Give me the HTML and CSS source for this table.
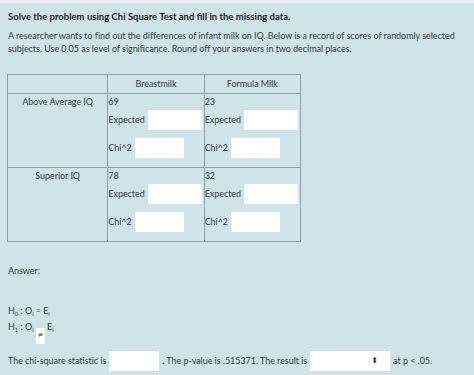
FILE: index.html
```html
<!DOCTYPE html>
<html>
<head>
<meta charset="utf-8">
<link rel="stylesheet" href="styles.css">
</head>
<body>
<div class="que">
  <p class="title">Solve the problem using Chi Square Test and fill in the missing data.</p>
  <p class="intro">A researcher wants to find out the differences of infant milk on IQ. Below is a record of scores of randomly selected subjects. Use 0.05 as level of significance. Round off your answers in two decimal places.</p>
  <table class="grid">
    <tr class="head">
      <th class="lab"></th>
      <th>Breastmilk</th>
      <th>Formula Milk</th>
    </tr>
    <tr class="row">
      <td class="lab">Above Average IQ</td>
      <td class="cell">
        <div class="val">69</div>
        <div class="fld"><span>Expected</span><span class="box wide"></span></div>
        <div class="fld"><span>Chi^2</span><span class="box"></span></div>
      </td>
      <td class="cell">
        <div class="val">23</div>
        <div class="fld"><span>Expected</span><span class="box wide"></span></div>
        <div class="fld"><span>Chi^2</span><span class="box"></span></div>
      </td>
    </tr>
    <tr class="row">
      <td class="lab">Superior IQ</td>
      <td class="cell">
        <div class="val">78</div>
        <div class="fld"><span>Expected</span><span class="box wide"></span></div>
        <div class="fld"><span>Chi^2</span><span class="box"></span></div>
      </td>
      <td class="cell">
        <div class="val">32</div>
        <div class="fld"><span>Expected</span><span class="box wide"></span></div>
        <div class="fld"><span>Chi^2</span><span class="box"></span></div>
      </td>
    </tr>
  </table>
  <p class="answer">Answer:</p>
  <div class="hyp first">H<sub>0</sub> : O<sub>i</sub> = E<sub>i</sub></div>
  <div class="hyp">H<sub>1</sub> : O<sub>i</sub> <span class="ne">≠</span> E<sub>i</sub></div>
  <div class="final">
    <span>The chi-square statistic is</span>
    <span class="box stat"></span>
    <span>. The p-value is .515371. The result is</span>
    <span class="box sel"><span class="arrows">⬍</span></span>
    <span>at p &lt; .05.</span>
  </div>
</div>
</body>
</html>
```
FILE: styles.css
```css
html, body {
  margin: 0;
  background: #cee4e9;
}
body {
  border-top: 3px solid #e6f0f2;
  font-family: Lato, "Open Sans", sans-serif;
  font-size: 9px;
  letter-spacing: -0.05px;
  color: #3a3f42;
  height: 372px;
  overflow: hidden;
}
.que {
  padding: 7px 8px 0 8px;
}
.title {
  margin: 0;
  font-weight: bold;
  font-size: 9.5px;
  letter-spacing: 0;
  color: #1b1f22;
  line-height: 13px;
}
.intro {
  margin: 6px 0 0 0;
  line-height: 13px;
}
.grid {
  margin-top: 19px;
  margin-left: -1px;
  border-collapse: collapse;
  border: 1px solid #80979e;
  width: 294px;
}
.grid th, .grid td {
  border: 1px solid #8ea3a9;
  padding: 0;
  vertical-align: top;
}
.grid th {
  font-weight: normal;
  height: 18px;
  line-height: 17px;
  text-align: center;
}
.grid th.lab { width: 99px; }
.grid td.lab {
  text-align: center;
  padding-top: 1px;
  line-height: 14px;
}
.cell {
  width: 95px;
  height: 73px;
}
.val {
  line-height: 14px;
  padding-top: 1px;
}
.fld {
  display: flex;
  align-items: center;
  gap: 3px;
  height: 21px;
  margin-top: 0;
}
.fld + .fld { margin-top: 7px; }
.box {
  display: inline-block;
  background: #fff;
  width: 49px;
  height: 20px;
}
.box.wide { width: 54px; }
.answer {
  margin: 22px 0 0 0;
  line-height: 13px;
}
.hyp {
  line-height: 16px;
}
.hyp.first { margin-top: 26px; }
.hyp sub {
  font-size: 6px;
  vertical-align: -2px;
  line-height: 0;
}
.ne {
  display: inline-flex;
  align-items: center;
  justify-content: center;
  background: #fff;
  width: 9px;
  height: 16px;
  font-family: "DejaVu Sans", sans-serif;
  font-size: 7px;
  line-height: 1;
  vertical-align: -7px;
  color: #444;
}
.final {
  display: flex;
  align-items: center;
  gap: 3px;
  margin-top: 7px;
}
.box.stat { width: 50px; }
.box.sel {
  width: 80px;
  position: relative;
}
.arrows {
  position: absolute;
  right: 12px;
  top: 5px;
  font-family: "DejaVu Sans", sans-serif;
  font-size: 8px;
  line-height: 10px;
  color: #333;
}
```
